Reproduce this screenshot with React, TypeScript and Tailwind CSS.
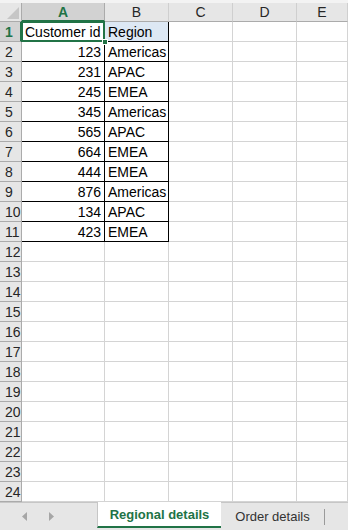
import React from 'react';

const rows: [number | null, string | null][] = [
  [null, null],
  [123, 'Americas'],
  [231, 'APAC'],
  [245, 'EMEA'],
  [345, 'Americas'],
  [565, 'APAC'],
  [664, 'EMEA'],
  [444, 'EMEA'],
  [876, 'Americas'],
  [134, 'APAC'],
  [423, 'EMEA'],
];

const colHeads = ['A', 'B', 'C', 'D', 'E'];

export default function App() {
  const all = Array.from({ length: 24 }, (_, i) => i + 1);
  return (
    <div
      className="w-[348px] h-[530px] overflow-hidden bg-white flex flex-col text-[14px] text-black"
      style={{ fontFamily: '"Liberation Sans", Arial, sans-serif' }}
    >
      {/* Column headers */}
      <div className="grid grid-cols-[22px_83px_64px_64px_64px_1fr] h-[22px] bg-[#e6e6e6] border-t-[3px] border-t-[#f3f3f3] shrink-0">
        <div className="relative border-r border-b border-[#ababab]">
          <svg className="absolute right-[2px] bottom-[2px]" width="12" height="12" viewBox="0 0 12 12">
            <polygon points="12,0 12,12 0,12" fill="#c6c6c6" />
          </svg>
        </div>
        {colHeads.map((c, i) => (
          <div
            key={c}
            className={
              i === 0
                ? 'flex items-center justify-center bg-[#d2d2d2] border-r border-[#ababab] border-b-2 border-b-[#217346] text-[#217346] font-bold leading-none'
                : 'flex items-center justify-center border-r border-[#cfcfcf] border-b border-b-[#ababab] text-[#262626] leading-none'
            }
          >
            {c}
          </div>
        ))}
      </div>

      {/* Rows */}
      <div className="flex-1 flex flex-col">
        {all.map((r) => {
          const data = r <= 11 ? rows[r - 1] : null;
          const inTable = r <= 11;
          return (
            <div key={r} className="grid grid-cols-[22px_83px_64px_64px_64px_1fr] h-[20px] shrink-0">
              <div
                className={
                  r === 1
                    ? 'flex items-center pl-[5px] bg-[#d2d2d2] border-r-2 border-r-[#217346] border-b border-[#ababab] text-[#217346] font-bold leading-none'
                    : 'flex items-center pl-[5px] bg-[#e6e6e6] border-r border-b border-[#ababab] text-[#262626] leading-none'
                }
              >
                {r}
              </div>
              {/* A */}
              {r === 1 ? (
                <div className="relative border-r border-b border-black">
                  <div className="absolute -left-[1px] -top-[1px] -right-[1px] -bottom-[1px] border-2 border-[#217346] flex items-center pl-[2px] leading-none">
                    Customer id
                  </div>
                  <div className="absolute -right-[4px] -bottom-[4px] w-[6px] h-[6px] bg-[#217346] border border-white" />
                </div>
              ) : (
                <div
                  className={
                    inTable
                      ? 'flex items-center justify-end pr-[3px] border-r border-b border-black leading-none'
                      : 'border-r border-b border-[#d4d4d4]'
                  }
                >
                  {data && data[0]}
                </div>
              )}
              {/* B */}
              <div
                className={
                  r === 1
                    ? 'flex items-center pl-[3px] bg-[#dde8f4] border-r border-b border-black leading-none'
                    : inTable
                      ? 'flex items-center pl-[3px] border-r border-b border-black leading-none'
                      : 'border-r border-b border-[#d4d4d4]'
                }
              >
                {r === 1 ? 'Region' : data && data[1]}
              </div>
              <div className="border-r border-b border-[#d4d4d4]" />
              <div className="border-r border-b border-[#d4d4d4]" />
              <div className="border-r border-b border-[#d4d4d4]" />
            </div>
          );
        })}
      </div>

      {/* Sheet tabs */}
      <div className="h-[28px] shrink-0 bg-[#e6e6e6] border-t border-[#c6c6c6] flex items-stretch text-[13px]">
        <div className="w-[97px] flex items-center pl-[22px] gap-[20px]">
          <svg width="6" height="9" viewBox="0 0 6 9">
            <polygon points="5,0 5,9 0,4.5" fill="#a6a6a6" />
          </svg>
          <svg width="6" height="9" viewBox="0 0 6 9">
            <polygon points="1,0 1,9 6,4.5" fill="#a6a6a6" />
          </svg>
        </div>
        <div className="w-[124px] -mt-[1px] bg-white border-l border-[#c6c6c6] border-b-2 border-b-[#217346] flex items-center justify-center text-[#217346] font-bold leading-none mb-[2px]">
          Regional details
        </div>
        <div className="w-[103px] flex items-center justify-center text-[#333] leading-none">
          Order details
        </div>
        <div className="w-px h-[16px] self-center bg-[#9a9a9a]" />
      </div>
    </div>
  );
}
